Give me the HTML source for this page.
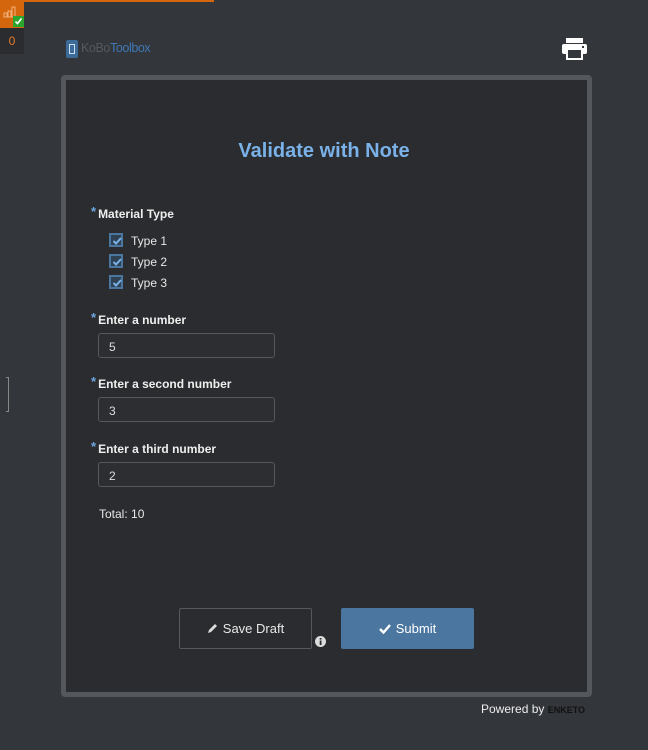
<!DOCTYPE html>
<html><head><meta charset="utf-8"><style>
*{margin:0;padding:0;box-sizing:border-box}
body{width:648px;height:750px;background:#33363a;font-family:"Liberation Sans",sans-serif;position:relative;overflow:hidden;color:#e8e8e8}
.abs{position:absolute}
.box{left:61px;top:75px;width:531px;height:622px;border:5px solid #54575b;border-radius:4px;background:#2b2c2f}
h1{position:absolute;left:0;width:100%;top:140px;text-align:center;font-size:20px;font-weight:bold;color:#7ab1e8}
.lbl{position:absolute;left:91px;font-size:12px;font-weight:bold;color:#eee}
.lbl b{color:#6ea7e0;font-size:13px;margin-right:2px;position:relative;top:-2px}
.cb{position:absolute;left:109px;width:14px;height:14px;border:2px solid #4a76a0;background:#2f4253}
.cb svg{position:absolute;left:1px;top:1px}
.ct{position:absolute;left:131px;font-size:12px;color:#e8e8e8}
.inp{position:absolute;left:98px;width:177px;height:25px;border:1px solid #55585c;border-radius:3px;background:#2d2e31;font-size:12px;padding:6px 0 0 10px;color:#ddd}
.btn{position:absolute;top:608px;height:41px;font-size:13px;display:flex;align-items:center;justify-content:center;gap:5px;border-radius:2px}
</style></head><body>
<div class="abs" style="left:0;top:0;width:214px;height:2px;background:#d4660e"></div>
<div class="abs" style="left:0;top:0;width:24px;height:28px;background:#d4660e"></div>
<svg class="abs" style="left:3px;top:5px" width="14" height="14"><path d="M1 12h3v-4H1zM5 12h3V6H5zM9 12h3V2H9z" fill="none" stroke="#f4b27a" stroke-width="1"/></svg>
<div class="abs" style="left:13px;top:16px;width:11px;height:11px;background:#2aa52e"></div>
<svg class="abs" style="left:14px;top:17px" width="9" height="9"><path d="M1.5 4.5l2 2 4-5" stroke="#fff" stroke-width="1.6" fill="none"/></svg>
<div class="abs" style="left:0;top:28px;width:24px;height:26px;background:#2b2c2f;color:#e87a2a;font-size:12px;text-align:center;padding-top:6px">0</div>
<div class="abs" style="left:6px;top:377px;width:3px;height:35px;border:1px solid #888;border-left:none"></div>
<div class="abs" style="left:66px;top:40px;width:12px;height:18px;background:#3d6b99;border-radius:2px"></div>
<div class="abs" style="left:69px;top:44px;width:6px;height:10px;border:1.5px solid #cfe0f0"></div>
<div class="abs" style="left:81px;top:41px;font-size:12.5px;letter-spacing:-0.4px"><span style="color:#555a60">KoBo</span><span style="color:#3f78b5">Toolbox</span></div>
<svg class="abs" style="left:561px;top:36px" width="27" height="24"><rect x="5" y="2" width="17" height="5" fill="#fff"/><rect x="1" y="8" width="25" height="10" rx="2" fill="#fff"/><rect x="6" y="13" width="15" height="10" fill="#33363a" stroke="#fff" stroke-width="2"/><rect x="21" y="10" width="2" height="2" fill="#33363a"/></svg>
<div class="abs box"></div>
<h1>Validate with Note</h1>
<div class="lbl" style="top:206px"><b>*</b>Material Type</div>
<div class="cb" style="top:233px"><svg width="10" height="10"><path d="M1.5 5l2.5 2.5 5-5.5" stroke="#7ab1e8" stroke-width="2" fill="none"/></svg></div><div class="ct" style="top:234px">Type 1</div>
<div class="cb" style="top:254px"><svg width="10" height="10"><path d="M1.5 5l2.5 2.5 5-5.5" stroke="#7ab1e8" stroke-width="2" fill="none"/></svg></div><div class="ct" style="top:255px">Type 2</div>
<div class="cb" style="top:275px"><svg width="10" height="10"><path d="M1.5 5l2.5 2.5 5-5.5" stroke="#7ab1e8" stroke-width="2" fill="none"/></svg></div><div class="ct" style="top:276px">Type 3</div>
<div class="lbl" style="top:312px"><b>*</b>Enter a number</div>
<div class="inp" style="top:333px">5</div>
<div class="lbl" style="top:376px"><b>*</b>Enter a second number</div>
<div class="inp" style="top:397px">3</div>
<div class="lbl" style="top:441px"><b>*</b>Enter a third number</div>
<div class="inp" style="top:462px">2</div>
<div class="abs" style="left:99px;top:507px;font-size:12px">Total: 10</div>
<div class="btn" style="left:179px;width:133px;border:1px solid #55585c;background:#2b2c2f"><svg width="11" height="11"><path d="M1 10l1-3 6-6 2 2-6 6z" fill="#ddd"/></svg>Save Draft</div>
<svg class="abs" style="left:315px;top:636px" width="11" height="11"><circle cx="5.5" cy="5.5" r="5.5" fill="#ddd"/><rect x="4.7" y="4.5" width="1.8" height="4.5" fill="#2b2c2f"/><rect x="4.7" y="2" width="1.8" height="1.6" fill="#2b2c2f"/></svg>
<div class="btn" style="left:341px;width:133px;background:#4a76a0;color:#fff"><svg width="12" height="11"><path d="M1 6l3.5 3.5L11 2" stroke="#fff" stroke-width="2.4" fill="none"/></svg>Submit</div>
<div class="abs" style="left:481px;top:702px;font-size:12px;color:#eee">Powered by <span style="font-weight:bold;color:#111;font-size:9px;letter-spacing:0px">ENKETO</span></div>
</body></html>
